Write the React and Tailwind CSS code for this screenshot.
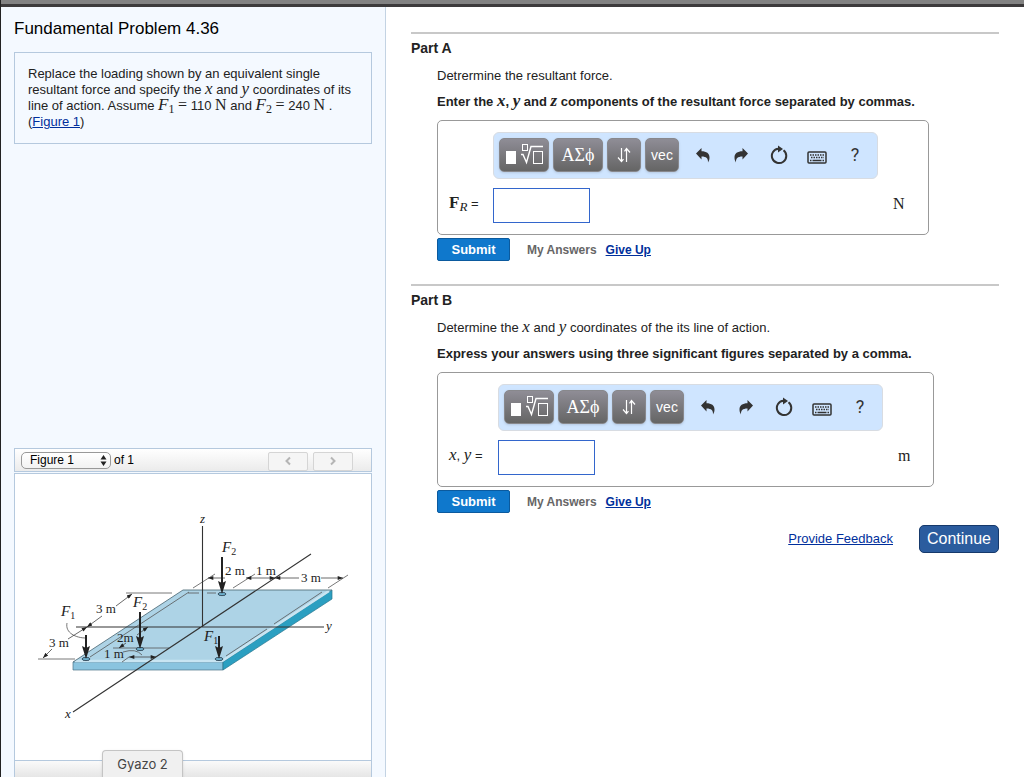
import { useState } from 'react';

const MathVar = ({ children }) => (
  <span className="font-['Liberation_Serif',serif] text-[17px] leading-0 italic">{children}</span>
);

const Unit = ({ children }) => (
  <span className="font-['Liberation_Serif',serif] text-base leading-0">{children}</span>
);

const Sub = ({ children }) => (
  <span className="relative top-[3px] font-['Liberation_Serif',serif] text-xs leading-0">{children}</span>
);

const TemplateIcon = () => (
  <svg width="38" height="24" viewBox="0 0 38 24" fill="none" stroke="white">
    <rect x="1" y="8" width="10" height="13" fill="white" stroke="none" />
    <rect x="17.5" y="1.5" width="5" height="6" />
    <path d="M16 11.5h2l3.5 8L26 3.5h12" strokeWidth="1.4" />
    <rect x="28.5" y="8.5" width="9" height="12" />
  </svg>
);

const ArrowsIcon = () => (
  <svg width="14" height="16" viewBox="0 0 14 16" fill="none" stroke="white" strokeWidth="1.2">
    <path d="M4.5 1v13M1 10.5l3.5 4 2-2.3M9.5 15V2M7.5 4.3l2-2.8 3.5 4" />
  </svg>
);

const UndoIcon = () => (
  <svg width="16" height="16" viewBox="0 0 16 16" fill="#333">
    <path d="M1 6.5 6.5 1v3.3C11.5 4.3 14.5 6.5 14.5 10.5c0 2-.6 3.5-1.5 5 .3-4-1.500-6-6.500-6v3Z" />
  </svg>
);

const RedoIcon = () => (
  <svg width="16" height="16" viewBox="0 0 16 16" fill="#333">
    <path d="M15 6.5 9.5 1v3.3C4.5 4.3 1.5 6.5 1.5 10.5c0 2 .6 3.5 1.5 5-.3-4 1.5-6 6.5-6v3Z" />
  </svg>
);

const ResetIcon = () => (
  <svg width="18" height="20" viewBox="0 0 18 20" fill="none">
    <path d="M13.5 5.2A7.2 7.2 0 1 1 8.5 3.7" stroke="#333" strokeWidth="2" />
    <path d="M8 .5 13 4 8 7.5Z" fill="#333" />
  </svg>
);

const KeyboardIcon = () => (
  <svg width="20" height="13" viewBox="0 0 20 13" fill="none" stroke="#333">
    <rect x="1" y="1" width="18" height="11" rx="1" strokeWidth="1.5" />
    <path d="M3 4h14M4 6.5h13" strokeWidth="1.5" strokeDasharray="1.5 1" />
    <path d="M3 9.5h1.5M5.5 9.5h9M15.5 9.5H17" strokeWidth="1.5" />
  </svg>
);

const padButton =
  "flex h-[34px] items-center justify-center rounded-[5px] border border-[#88888c] bg-linear-to-b from-[#8f8d96] to-[#656565] text-white shadow-sm";
const iconButton = "flex h-[34px] w-[38px] items-center justify-center text-[#333]";

const Toolbar = () => (
  <div className="flex h-[47px] items-start rounded-[6px] border border-[#d8dce2] bg-[#cfe5ff] pt-[5px] pr-[3px] pl-[5px]">
    <div className="flex gap-1 pr-[5px]">
      <button type="button" aria-label="Templates" className={`${padButton} w-[50px]`}><TemplateIcon /></button>
      <button type="button" aria-label="Greek letters" className={`${padButton} w-[50px] font-['Liberation_Serif',serif] text-lg`}>ΑΣϕ</button>
      <button type="button" aria-label="Sub and superscript" className={`${padButton} w-[34px]`}><ArrowsIcon /></button>
      <button type="button" className={`${padButton} w-[34px] text-sm`}>vec</button>
    </div>
    <button type="button" aria-label="Undo" className={iconButton}><UndoIcon /></button>
    <button type="button" aria-label="Redo" className={iconButton}><RedoIcon /></button>
    <button type="button" aria-label="Reset" className={iconButton}><ResetIcon /></button>
    <button type="button" aria-label="Keyboard" className={`${iconButton} pt-1`}><KeyboardIcon /></button>
    <button type="button" aria-label="Help" className={`${iconButton} font-[Roboto,sans-serif] text-lg`}>?</button>
  </div>
);

const Part = ({ id, title, question, instruction, label, labelWidth, unit }) => {
  const [answer, setAnswer] = useState("");

  return (
    <section className="border-t-2 border-[#c8c8c8]">
      <h2 className="pt-1 text-sm leading-5 font-bold text-[#222]">{title}</h2>
      <div className="pl-[26px]">
        <p className="pt-2 text-[13px] leading-5">{question}</p>
        <p className="pt-1.5 text-[13px] leading-5 font-bold">{instruction}</p>

        {/* Answer box */}
        <form className="mt-2" onSubmit={(e) => e.preventDefault()}>
          <div className="flex h-[115px] w-fit rounded-[5px] border border-[#999] pt-[11px] pr-[23px] pl-[11px]">
            <label htmlFor={id} className={`${labelWidth} shrink-0 pt-[62px] text-[13px] leading-5`}>{label}</label>
            <div>
              <Toolbar />
              <input
                id={id}
                type="text"
                className="mt-[9px] h-[35px] w-[97px] border border-[#3366cc] bg-white px-2 text-sm outline-none"
                value={answer}
                onChange={(e) => setAnswer(e.target.value)}
              />
            </div>
            <div className="pt-[62px] pl-[15px] leading-5"><Unit>{unit}</Unit></div>
          </div>
          <div className="flex items-center pt-[3px]">
            <button type="submit" className="h-[23px] w-[73px] rounded-[2px] border border-[#0b5a9e] bg-[#0f78cc] text-[13px] leading-5 font-bold text-white">
              Submit
            </button>
            <span className="pl-[17px] text-xs font-bold text-[#666]">My Answers</span>
            <a href="#" className="ml-[9px] text-xs font-bold text-[#002f9c] underline">Give Up</a>
          </div>
        </form>
      </div>
    </section>
  );
};

const Force = ({ x, y, n }) => (
  <text x={x} y={y} fontSize="15" fontStyle="italic">
    F<tspan fontSize="10" fontStyle="normal" dy="3">{n}</tspan>
  </text>
);

const ForceArrow = ({ x, top, tip }) => (
  <g>
    <ellipse cx={x} cy={tip + 1} rx="4" ry="1.6" fill="#6fb3d0" stroke="#234" strokeWidth="0.8" />
    <path d={`M${x} ${top}V${tip - 10}`} stroke="#222" strokeWidth="2" />
    <path d={`M${x - 4} ${tip - 12}L${x} ${tip + 1}L${x + 4} ${tip - 12}L${x} ${tip - 10}Z`} fill="#222" />
  </g>
);

const PlateFigure = () => (
  <svg className="h-[286px] w-full" viewBox="15 474 356 286" role="img" aria-label="Plate with four loads" fontFamily="'Liberation Serif', serif" fill="#222">
    <defs>
      <marker id="tip" viewBox="0 0 8 6" refX="8" refY="3" markerWidth="7" markerHeight="4" markerUnits="userSpaceOnUse" orient="auto-start-reverse">
        <path d="M0 0L8 3L0 6Z" fill="#222" />
      </marker>
    </defs>

    {/* Plate */}
    <path d="M73 662L183 590H332L223 662Z" fill="#add3e6" />
    <path d="M73 662H223V670H73Z" fill="#8ac4df" stroke="#4a7486" strokeWidth="0.7" />
    <path d="M223 662L332 590V599L223 670Z" fill="#2b9fc1" stroke="#28758e" strokeWidth="0.7" />
    <path d="M75 661H222L329 591" fill="none" stroke="#c9e5f2" strokeWidth="2.5" />
    <path d="M73 662L183 590H332" fill="none" stroke="#56727e" strokeWidth="0.9" />

    {/* Edge and extension lines */}
    <g fill="none" stroke="#555" strokeWidth="0.8">
      <path d="M90 657L189 592M226 656L267 629M274 624L322 592M188 593H199M207 593H216" />
      <path d="M38 659H75M126 593H172M113 648H169M122 662L129 657" />
      <path d="M193 588L215 574M233 588L255 574M328 588L348 575" />
      <path d="M67 623C65 633 76 638 86 638M123 652Q136 648 142 655" />
    </g>

    {/* Axes */}
    <path d="M202.500 526V627M76 627H324M73 712L311 554" fill="none" stroke="#333" strokeWidth="1.1" />

    {/* Dimension arrows */}
    <g fill="none" stroke="#444" strokeWidth="0.8">
      <path d="M52 649L43 658" markerEnd="url(#tip)" />
      <path d="M68 639L87 627" markerEnd="url(#tip)" />
      <path d="M102 616L87 627" markerEnd="url(#tip)" />
      <path d="M116 606L132 594" markerEnd="url(#tip)" />
      <path d="M126 643L119 648" markerEnd="url(#tip)" />
      <path d="M137 635L148 627" markerEnd="url(#tip)" />
      <path d="M129 657H156" markerStart="url(#tip)" markerEnd="url(#tip)" />
      <path d="M225 578H208" markerEnd="url(#tip)" />
      <path d="M246 578H275" markerStart="url(#tip)" markerEnd="url(#tip)" />
      <path d="M299 578H275" markerEnd="url(#tip)" />
      <path d="M321 578H343" markerEnd="url(#tip)" />
    </g>

    <ForceArrow x={222} top={557} tip={593} />
    <ForceArrow x={140} top={612} tip={648} />
    <ForceArrow x={86} top={635} tip={658} />
    <ForceArrow x={219} top={636} tip={658} />

    <Force x={222} y={552} n="2" />
    <Force x={133} y={607} n="2" />
    <Force x={61} y={616} n="1" />
    <Force x={204} y={641} n="1" />

    <g fontSize="13">
      <text x="96" y="613">3 m</text>
      <text x="49" y="647">3 m</text>
      <text x="117" y="642">2m</text>
      <text x="104" y="658">1 m</text>
      <text x="225" y="575">2 m</text>
      <text x="256" y="575">1 m</text>
      <text x="301" y="582">3 m</text>
      <g fontStyle="italic">
        <text x="65" y="718">x</text>
        <text x="326" y="630">y</text>
        <text x="200" y="523">z</text>
      </g>
    </g>
  </svg>
);

const FigurePanel = () => (
  <div>
    <div className="flex h-6 items-center border border-[#b5c9de] bg-linear-to-b from-white to-[#ebebeb] pl-1.5 text-xs">
      <div className="relative">
        <select aria-label="Figure" className="block h-[17px] w-[90px] appearance-none rounded-[5px] border border-[#999] bg-linear-to-b from-white to-[#f2f2f2] pl-2 text-xs leading-[15px] text-black">
          <option>Figure 1</option>
        </select>
        <svg className="pointer-events-none absolute top-[3px] right-1" width="7" height="11" viewBox="0 0 7 11" fill="#222">
          <path d="M3.5 0 6.5 4.5h-6ZM3.5 11 .5 6.5h6Z" />
        </svg>
      </div>
      <span className="pl-[3px] text-black">of 1</span>
      <div className="ml-auto flex gap-[5px] pt-0.5 pr-[18px]">
        <button type="button" aria-label="Previous figure" disabled className="flex h-[19px] w-10 items-center justify-center rounded-[2px] border border-[#d5d5d5] bg-[#f5f5f5]">
          <svg width="8" height="10" viewBox="0 0 8 10" fill="none" stroke="#b5b5b5" strokeWidth="2"><path d="M6 1.5 2.5 5 6 8.5" /></svg>
        </button>
        <button type="button" aria-label="Next figure" disabled className="flex h-[19px] w-10 items-center justify-center rounded-[2px] border border-[#d5d5d5] bg-[#f5f5f5]">
          <svg width="8" height="10" viewBox="0 0 8 10" fill="none" stroke="#b5b5b5" strokeWidth="2"><path d="M2 1.5 5.5 5 2 8.5" /></svg>
        </button>
      </div>
    </div>
    <div className="mt-px border border-b-0 border-[#b5c9de] bg-white">
      <PlateFigure />
      <div className="h-[17px] border-t border-[#b5c9de] bg-linear-to-b from-[#fafafa] to-[#e6e6e6]" />
    </div>
  </div>
);

const App = () => (
  <div className="relative flex min-h-screen flex-col border-l border-[#222] bg-white font-['Liberation_Sans',Arial,sans-serif] text-[#222]">
    <div className="h-[7px] border-b-[3px] border-[#3c3a3b] bg-[#828282]" />

    <div className="flex grow">
      {/* Problem statement and figure */}
      <aside className="flex w-[385px] shrink-0 flex-col justify-between border-r border-[#c3d3e3] bg-[#f4f9ff] px-[13px]">
        <div>
          <h1 className="pt-2.5 text-[17px] leading-6 text-black">Fundamental Problem 4.36</h1>
          <div className="mt-[11px] border border-[#b5c9de] p-[13px] text-[13px] leading-4">
            Replace the loading shown by an equivalent single
            <br />
            resultant force and specify the <MathVar>x</MathVar> and <MathVar>y</MathVar> coordinates of its
            <br />
            line of action. Assume <MathVar>F</MathVar><Sub>1</Sub> <Unit>=</Unit> 110 <Unit>N</Unit> and <MathVar>F</MathVar><Sub>2</Sub> <Unit>=</Unit> 240 <Unit>N</Unit> .
            <br />
            (<a href="#" className="text-[#002f9c] underline">Figure 1</a>)
          </div>
        </div>
        <FigurePanel />
      </aside>

      {/* Answer parts */}
      <main className="grow px-[25px] pt-[25px]">
        <div className="flex flex-col gap-[23px]">
          <Part
            id="force"
            title="Part A"
            question="Detrermine the resultant force."
            instruction={<>Enter the <MathVar>x</MathVar>, <MathVar>y</MathVar> and <MathVar>z</MathVar> components of the resultant force separated by commas.</>}
            label={<><span className="font-['Liberation_Serif',serif] text-[17px] leading-0 font-bold">F</span><span className="relative top-[3px] font-['Liberation_Serif',serif] leading-0 italic">R</span> =</>}
            labelWidth="w-[44px]"
            unit="N"
          />
          <Part
            id="coordinates"
            title="Part B"
            question={<>Determine the <MathVar>x</MathVar> and <MathVar>y</MathVar> coordinates of the its line of action.</>}
            instruction="Express your answers using three significant figures separated by a comma."
            label={<><MathVar>x</MathVar>, <MathVar>y</MathVar> =</>}
            labelWidth="w-[49px]"
            unit="m"
          />
        </div>
        <div className="flex items-center justify-end gap-[26px] pt-3 pb-6">
          <a href="#" className="text-[13px] text-[#002f9c] underline">Provide Feedback</a>
          <button type="button" className="h-7 w-20 rounded-[5px] border border-[#16396b] bg-[#2b5c9e] text-base leading-6 text-white">Continue</button>
        </div>
      </main>
    </div>

    {/* Dock tooltip */}
    <div className="absolute bottom-0 left-[101px] h-[27px] w-[81px] rounded-t-[4px] border border-b-0 border-[#c4c4c4] bg-[#f0f0f0] text-center font-[Inter,sans-serif] text-[13px] leading-[26px] text-[#444] shadow">
      Gyazo 2
    </div>
  </div>
);

export default App;
